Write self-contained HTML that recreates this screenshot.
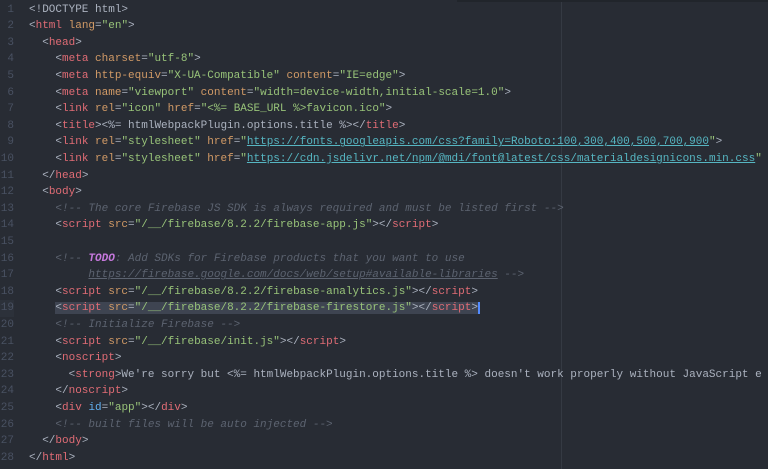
<!DOCTYPE html>
<html><head><style>
html,body{margin:0;padding:0;background:#282c34;width:768px;height:469px;overflow:hidden}
.top{position:absolute;left:457px;top:0;width:311px;height:2px;background:#21252b}
.guide{position:absolute;left:561px;top:2px;width:1px;height:467px;background:#353a43}
.ed{position:absolute;left:0;top:1.7px;width:768px;overflow:hidden;font-family:"Liberation Mono",monospace;font-size:11px;color:#abb2bf}
.l{height:16.6px;line-height:16.6px;white-space:pre;position:relative;overflow:hidden}
.n{display:inline-block;width:14px;text-align:right;color:#495162;margin-right:15px}
.t{color:#e06c75}.a{color:#d19a66}.s{color:#98c379}.c{color:#5c6370;font-style:italic}
.u{color:#56b6c2;text-decoration:underline}.i{color:#61afef}.td{color:#c678dd;font-weight:bold}
.cu{color:#5c6370;text-decoration:underline}
.hl{background:#2c313a}
.sel{background:#3e4451}
.cur{border-right:2px solid #528bff}
</style></head><body>
<div class="top"></div><div class="guide"></div>
<div class="ed">
<div class="l"><span class="n">1</span>&lt;!DOCTYPE html&gt;</div>
<div class="l"><span class="n">2</span>&lt;<span class="t">html</span> <span class="a">lang</span>=<span class="s">"en"</span>&gt;</div>
<div class="l"><span class="n">3</span>  &lt;<span class="t">head</span>&gt;</div>
<div class="l"><span class="n">4</span>    &lt;<span class="t">meta</span> <span class="a">charset</span>=<span class="s">"utf-8"</span>&gt;</div>
<div class="l"><span class="n">5</span>    &lt;<span class="t">meta</span> <span class="a">http-equiv</span>=<span class="s">"X-UA-Compatible"</span> <span class="a">content</span>=<span class="s">"IE=edge"</span>&gt;</div>
<div class="l"><span class="n">6</span>    &lt;<span class="t">meta</span> <span class="a">name</span>=<span class="s">"viewport"</span> <span class="a">content</span>=<span class="s">"width=device-width,initial-scale=1.0"</span>&gt;</div>
<div class="l"><span class="n">7</span>    &lt;<span class="t">link</span> <span class="a">rel</span>=<span class="s">"icon"</span> <span class="a">href</span>=<span class="s">"&lt;%= BASE_URL %&gt;favicon.ico"</span>&gt;</div>
<div class="l"><span class="n">8</span>    &lt;<span class="t">title</span>&gt;&lt;%= htmlWebpackPlugin.options.title %&gt;&lt;/<span class="t">title</span>&gt;</div>
<div class="l"><span class="n">9</span>    &lt;<span class="t">link</span> <span class="a">rel</span>=<span class="s">"stylesheet"</span> <span class="a">href</span>=<span class="s">"</span><span class="u">https://fonts.googleapis.com/css?family=Roboto:100,300,400,500,700,900</span><span class="s">"</span>&gt;</div>
<div class="l"><span class="n">10</span>    &lt;<span class="t">link</span> <span class="a">rel</span>=<span class="s">"stylesheet"</span> <span class="a">href</span>=<span class="s">"</span><span class="u">https://cdn.jsdelivr.net/npm/@mdi/font@latest/css/materialdesignicons.min.css</span><span class="s">"</span></div>
<div class="l"><span class="n">11</span>  &lt;/<span class="t">head</span>&gt;</div>
<div class="l"><span class="n">12</span>  &lt;<span class="t">body</span>&gt;</div>
<div class="l"><span class="n">13</span>    <span class="c">&lt;!-- The core Firebase JS SDK is always required and must be listed first --&gt;</span></div>
<div class="l"><span class="n">14</span>    &lt;<span class="t">script</span> <span class="a">src</span>=<span class="s">"/__/firebase/8.2.2/firebase-app.js"</span>&gt;&lt;/<span class="t">script</span>&gt;</div>
<div class="l"><span class="n">15</span></div>
<div class="l"><span class="n">16</span>    <span class="c">&lt;!-- <span class="td">TODO</span>: Add SDKs for Firebase products that you want to use</span></div>
<div class="l"><span class="n">17</span><span class="c">         <span class="cu">https://firebase.google.com/docs/web/setup#available-libraries</span> --&gt;</span></div>
<div class="l"><span class="n">18</span>    &lt;<span class="t">script</span> <span class="a">src</span>=<span class="s">"/__/firebase/8.2.2/firebase-analytics.js"</span>&gt;&lt;/<span class="t">script</span>&gt;</div>
<div class="l"><span class="n hl">19</span>    <span class="sel cur">&lt;<span class="t">script</span> <span class="a">src</span>=<span class="s">"/__/firebase/8.2.2/firebase-firestore.js"</span>&gt;&lt;/<span class="t">script</span>&gt;</span></div>
<div class="l"><span class="n">20</span>    <span class="c">&lt;!-- Initialize Firebase --&gt;</span></div>
<div class="l"><span class="n">21</span>    &lt;<span class="t">script</span> <span class="a">src</span>=<span class="s">"/__/firebase/init.js"</span>&gt;&lt;/<span class="t">script</span>&gt;</div>
<div class="l"><span class="n">22</span>    &lt;<span class="t">noscript</span>&gt;</div>
<div class="l"><span class="n">23</span>      &lt;<span class="t">strong</span>&gt;We're sorry but &lt;%= htmlWebpackPlugin.options.title %&gt; doesn't work properly without JavaScript e</div>
<div class="l"><span class="n">24</span>    &lt;/<span class="t">noscript</span>&gt;</div>
<div class="l"><span class="n">25</span>    &lt;<span class="t">div</span> <span class="i">id</span>=<span class="s">"app"</span>&gt;&lt;/<span class="t">div</span>&gt;</div>
<div class="l"><span class="n">26</span>    <span class="c">&lt;!-- built files will be auto injected --&gt;</span></div>
<div class="l"><span class="n">27</span>  &lt;/<span class="t">body</span>&gt;</div>
<div class="l"><span class="n">28</span>&lt;/<span class="t">html</span>&gt;</div>
</div>
</body></html>
